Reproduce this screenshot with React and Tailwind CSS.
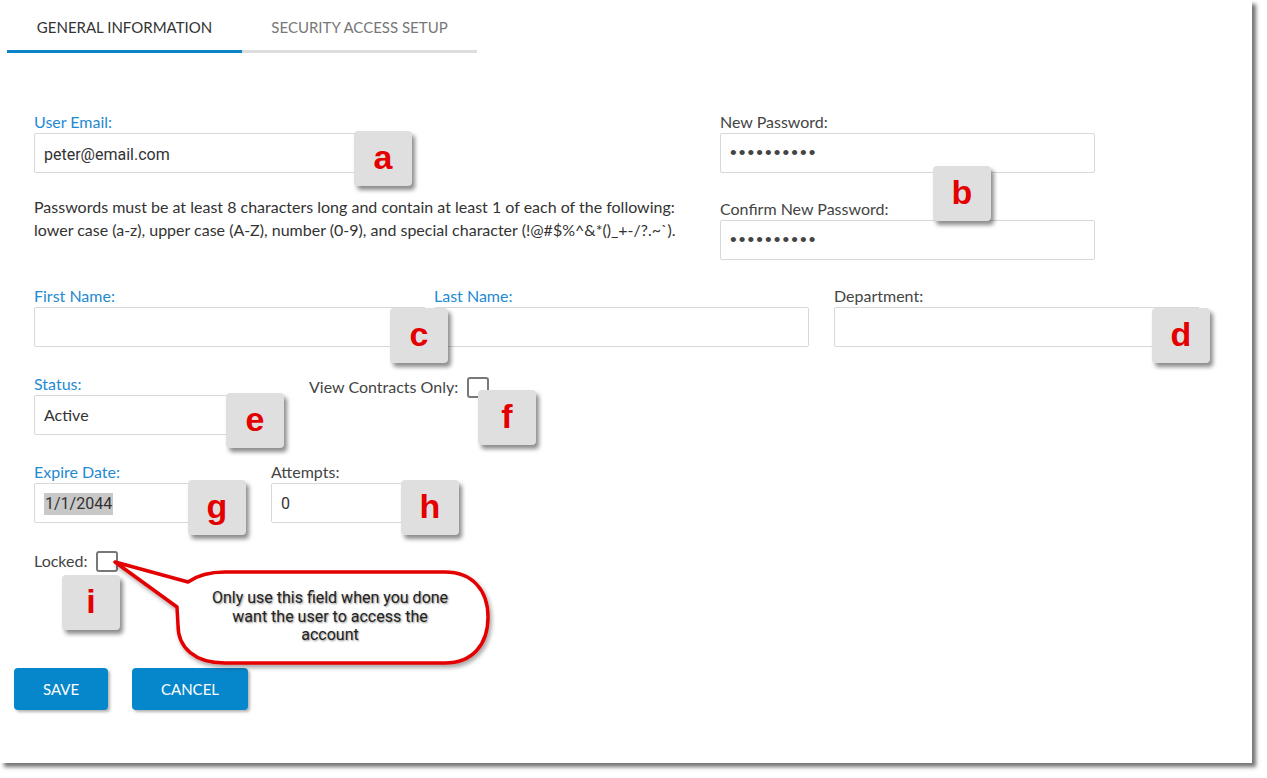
import React from "react";

const Badge = ({ letter, className }) => {
  return (
    <div
      className={
        "absolute w-[58px] h-[55px] bg-[#e0dfdf] rounded-[4px] shadow-[3px_4px_4px_rgba(0,0,0,0.45)] flex items-center justify-center text-[#e40000] font-bold text-[34px] font-['Liberation_Sans',Arial,sans-serif] leading-none pb-[4px] " +
        className
      }
    >
      {letter}
    </div>
  );
};

const Label = ({ children, blue }) => (
  <div
    className={
      "text-[16px] leading-[18px] mb-[2px] " +
      (blue ? "text-[#1f8ad2]" : "text-[#444]")
    }
  >
    {children}
  </div>
);

const Box = ({ className, children }) => (
  <div
    className={
      "h-[40px] border border-[#d8d8d8] rounded-[2px] bg-white px-[9px] flex items-center text-[#333] " +
      className
    }
  >
    {children}
  </div>
);

const Check = () => (
  <span className="block w-[22px] h-[21px] border-2 border-[#787878] rounded-[3px] bg-white"></span>
);

const Dots = () => (
  <span className="text-[#444] text-[19px] tracking-[2.1px] font-['Liberation_Sans',Arial,sans-serif]">
    ••••••••••
  </span>
);

export default function App() {
  return (
    <div className="w-full h-[778px] bg-white font-['Lato',sans-serif]">
      <div className="relative w-[1252px] h-[763px] bg-white shadow-[4px_4px_4px_rgba(0,0,0,0.55)]">
        {/* Tabs */}
        <div className="ml-[7px] flex w-[470px]">
          <div className="w-[235px] h-[53px] pt-[4px] flex items-center justify-center border-b-[3px] border-[#0a84c6] text-[15px] text-[#333]">
            GENERAL INFORMATION
          </div>
          <div className="w-[235px] h-[53px] pt-[4px] flex items-center justify-center border-b-[3px] border-[#dddddd] text-[15px] text-[#777]">
            SECURITY ACCESS SETUP
          </div>
        </div>

        {/* Form */}
        <div className="pl-[34px] mt-[60px]">
          <div className="flex">
            <div className="w-[686px]">
              <Label blue>User Email:</Label>
              <Box className="w-[336px] pt-[4px] font-['Roboto',sans-serif] text-[16px]">
                peter@email.com
              </Box>
              <div className="mt-[22px] text-[16px] leading-[23px] text-[#333]">
                Passwords must be at least 8 characters long and contain at least 1 of each of the following:
                <br />
                lower case (a-z), upper case (A-Z), number (0-9), and special character (!@#$%^&amp;*()_+-/?.~`).
              </div>
            </div>
            <div className="w-[375px]">
              <Label>New Password:</Label>
              <Box className="w-[375px] pt-[1px]">
                <Dots />
              </Box>
              <div className="mt-[27px]">
                <Label>Confirm New Password:</Label>
              </div>
              <Box className="w-[375px] pt-[1px]">
                <Dots />
              </Box>
            </div>
          </div>

          <div className="flex mt-[27px]">
            <div className="w-[400px]">
              <Label blue>First Name:</Label>
              <Box className="w-[392px]" />
            </div>
            <div className="w-[400px]">
              <Label blue>Last Name:</Label>
              <Box className="w-[375px]" />
            </div>
            <div>
              <Label>Department:</Label>
              <Box className="w-[366px]" />
            </div>
          </div>

          <div className="flex mt-[28px]">
            <div className="w-[275px]">
              <Label blue>Status:</Label>
              <Box className="w-[206px] text-[16px]">Active</Box>
            </div>
            <div className="flex items-center h-[24px] gap-[9px] text-[16px] text-[#444]">
              <span>View Contracts Only:</span>
              <Check />
            </div>
          </div>

          <div className="flex mt-[28px]">
            <div className="w-[237px]">
              <Label blue>Expire Date:</Label>
              <Box className="w-[165px] pt-[2px] font-['Roboto',sans-serif] text-[16px]">
                <span className="bg-[#c8c8c8] px-[1px] leading-[22px]">1/1/2044</span>
              </Box>
            </div>
            <div>
              <Label>Attempts:</Label>
              <Box className="w-[140px] pt-[2px] font-['Roboto',sans-serif] text-[16px]">0</Box>
            </div>
          </div>

          <div className="flex items-center gap-[9px] mt-[27px] h-[22px] text-[16px] text-[#444]">
            <span>Locked:</span>
            <Check />
          </div>
        </div>

        <div className="flex gap-[24px] pl-[14px] mt-[96px]">
          <button className="w-[94px] h-[42px] bg-[#0787cb] text-white text-[15px] rounded-[4px] shadow-[2px_2px_3px_rgba(0,0,0,0.3)]">
            SAVE
          </button>
          <button className="w-[116px] h-[42px] bg-[#0787cb] text-white text-[15px] rounded-[4px] shadow-[2px_2px_3px_rgba(0,0,0,0.3)]">
            CANCEL
          </button>
        </div>

        {/* Annotation badges */}
        <Badge letter="a" className="left-[354px] top-[131px]" />
        <Badge letter="b" className="left-[933px] top-[166px]" />
        <Badge letter="c" className="left-[390px] top-[308px]" />
        <Badge letter="d" className="left-[1152px] top-[308px]" />
        <Badge letter="e" className="left-[226px] top-[393px]" />
        <Badge letter="f" className="left-[478px] top-[390px]" />
        <Badge letter="g" className="left-[188px] top-[480px]" />
        <Badge letter="h" className="left-[401px] top-[480px]" />
        <Badge letter="i" className="left-[62px] top-[575px]" />

        {/* Callout */}
        <svg
          className="absolute left-[100px] top-[540px]"
          width="400"
          height="135"
          viewBox="0 0 400 135"
        >
          <defs>
            <filter id="sh" x="-10%" y="-10%" width="120%" height="130%">
              <feDropShadow dx="2" dy="3" stdDeviation="2" floodColor="#000" floodOpacity="0.35" />
            </filter>
          </defs>
          <path
            d="M 88 42 C 98 35 110 32 125 32 L 345 32 C 372 32 388 50 388 77 C 388 105 372 123 345 123 L 125 123 C 95 123 78 108 78 85 L 77 67 L 15 22 Z"
            fill="#fff"
            stroke="#e30000"
            strokeWidth="3.5"
            strokeLinejoin="round"
            filter="url(#sh)"
          />
        </svg>
        <div className="absolute left-[180px] top-[589px] w-[300px] text-center font-['Roboto',sans-serif] text-[16px] leading-[18.5px] text-[#222] [text-shadow:1px_1px_2px_rgba(0,0,0,0.45)]">
          Only use this field when you done
          <br />
          want the user to access the
          <br />
          account
        </div>
      </div>
    </div>
  );
}
